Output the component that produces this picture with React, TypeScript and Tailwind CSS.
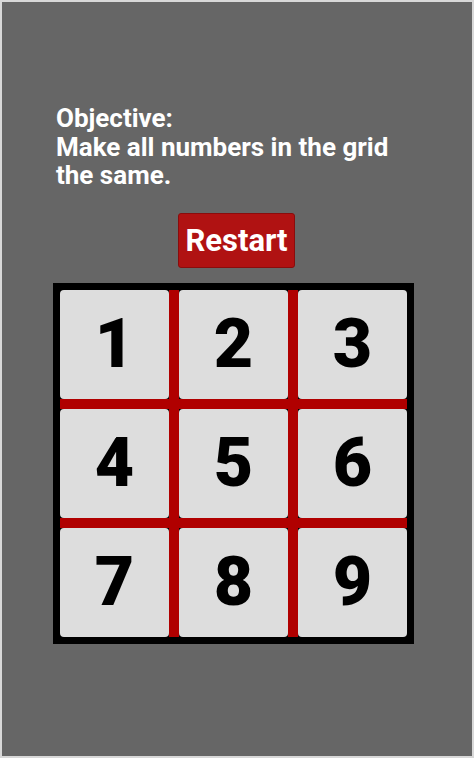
const numbers = [
    [1, 2, 3],
    [4, 5, 6],
    [7, 8, 9],
];

const cellClass =
    'w-[109px] h-[109px] bg-[#dddddd] rounded-[4px] flex items-center justify-center text-[68px] font-black text-black leading-none';

function Row({ row }: { row: number[] }) {
    return (
        <div className="flex">
            {row.map((n, i) => (
                <div key={n} className="flex">
                    {i > 0 && <div className="w-[10px] bg-[#b00000]"></div>}
                    <div className={cellClass}>{n}</div>
                </div>
            ))}
        </div>
    );
}

export default function App() {
    return (
        <div
            className="w-[474px] h-[758px] bg-[#666666] border-2 border-[#d8d8d8] flex flex-col"
            style={{ fontFamily: 'Roboto, "Noto Sans", sans-serif' }}
        >
            <div className="pt-[102px] pl-[54px] text-white font-bold text-[26px] leading-[28.5px]">
                <p>Objective:</p>
                <p>Make all numbers in the grid</p>
                <p>the same.</p>
            </div>
            <div className="mt-[23px] flex pl-[176px]">
                <button className="w-[117px] h-[55px] bg-[#b01212] border border-[#8a0c0c] rounded-[3px] text-white font-bold text-[31px] leading-none flex items-center justify-center">
                    Restart
                </button>
            </div>
            <div className="mt-[15px] ml-[51px] w-fit bg-black p-[7px]">
                <div className="flex flex-col">
                    {numbers.map((row, i) => (
                        <div key={i} className="flex flex-col">
                            {i > 0 && <div className="h-[10px] bg-[#b00000]"></div>}
                            <Row row={row} />
                        </div>
                    ))}
                </div>
            </div>
        </div>
    );
}
